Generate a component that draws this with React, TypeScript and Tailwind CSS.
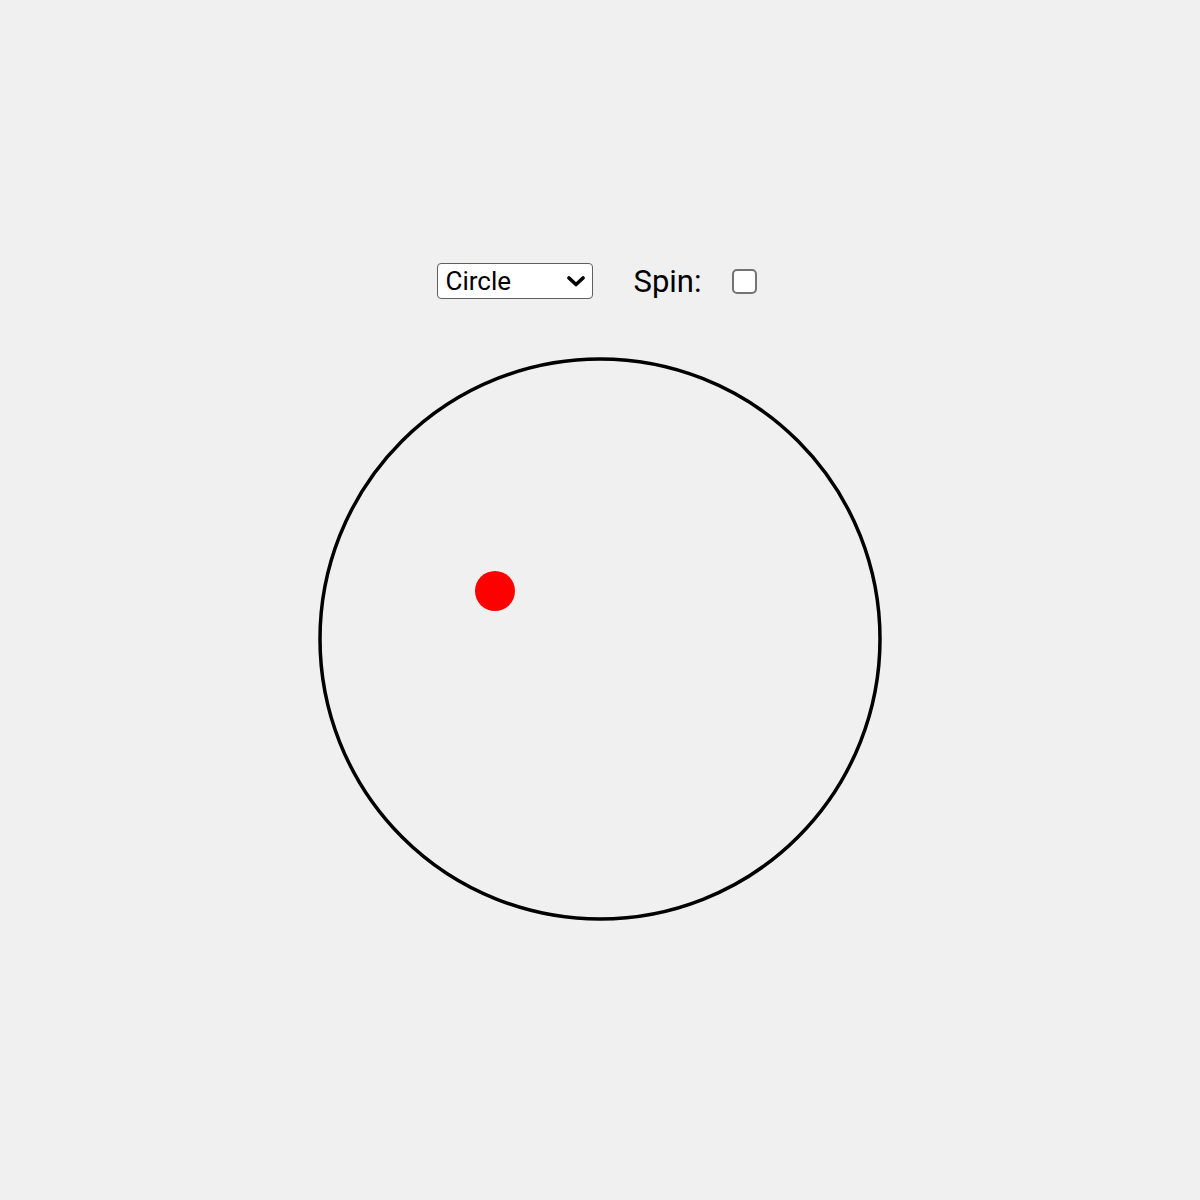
import React, { useState } from 'react';

const App: React.FC = () => {
  const [shape, setShape] = useState('circle');
  const [spin, setSpin] = useState(false);

  return (
    <div className="min-h-screen bg-[#f0f0f0] flex flex-col items-center pt-[263px]" style={{ fontFamily: 'Roboto, sans-serif' }}>
      {/* Controls */}
      <div className="flex items-center h-[36px] ml-[-6px]">
        <div className="relative w-[156px] h-[36px]">
          <select
            value={shape}
            onChange={(e) => setShape(e.target.value)}
            className="appearance-none w-full h-full text-[26px] leading-none text-black bg-white border-[1.5px] border-[#5f5f5f] rounded-[4px] pl-[8px] pr-[30px] outline-none"
            style={{ fontFamily: 'Roboto, sans-serif' }}
          >
            <option value="circle">Circle</option>
            <option value="square">Square</option>
            <option value="triangle">Triangle</option>
          </select>
          <svg
            className="absolute right-[8px] top-[13px] pointer-events-none"
            width="18"
            height="11"
            viewBox="0 0 18 11"
          >
            <path d="M2 2 L9 8.5 L16 2" fill="none" stroke="#000" strokeWidth="3.6" strokeLinecap="round" strokeLinejoin="round" />
          </svg>
        </div>
        <label className="ml-[41px] text-[31px] text-black leading-none">Spin:</label>
        <input
          type="checkbox"
          checked={spin}
          onChange={(e) => setSpin(e.target.checked)}
          className="appearance-none ml-[31px] w-[25px] h-[25px] m-0 bg-white border-2 border-[#737373] rounded-[5px] checked:bg-[#0075ff] checked:border-[#0075ff]"
        />
      </div>

      {/* Orbit */}
      <svg width="566" height="566" viewBox="0 0 566 566" className="mt-[57px]">
        <circle cx="283" cy="283" r="280" fill="none" stroke="#000" strokeWidth="3.5" />
        <circle cx="178" cy="235" r="20" fill="#ff0000" />
      </svg>
    </div>
  );
};

export default App;
